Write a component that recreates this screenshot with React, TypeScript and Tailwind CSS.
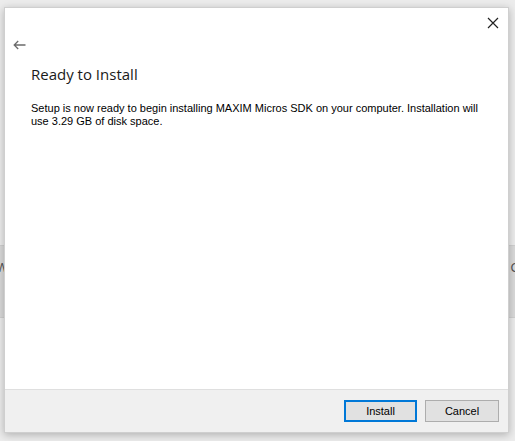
import React from 'react'

export default function App() {
  return (
    <div className="relative w-[515px] h-[441px] overflow-hidden bg-[#ececec] font-['Liberation_Sans',sans-serif]">
      {/* desktop behind the dialog */}
      <div className="absolute left-0 top-[245px] w-full h-[73px] bg-[#dadada] border-y border-[#d0d0d0]">
        <span className="absolute left-[-4px] top-[12px] text-[13px] text-[#555]">W</span>
        <span className="absolute right-[-5px] top-[12px] text-[13px] text-[#555]">C</span>
      </div>

      {/* dialog window */}
      <div className="absolute left-[4px] top-[7px] w-[505px] h-[426px] flex flex-col bg-white border border-[#cfcfcf] shadow-[0_2px_8px_rgba(0,0,0,0.25)]">
        <div className="flex-1 flex flex-col">
          <div className="flex justify-end h-[32px] pr-[9px] pt-[9px]">
            <svg width="12" height="12" viewBox="0 0 12 12" className="text-[#222]">
              <path d="M1 1L11 11M11 1L1 11" stroke="currentColor" strokeWidth="1.2" fill="none" />
            </svg>
          </div>
          <div className="pl-[8px] h-[14px]">
            <svg width="13" height="10" viewBox="0 0 13 10" className="text-[#6b6b6b]">
              <path d="M12.5 5H1.2M5.2 1L1.2 5L5.2 9" stroke="currentColor" strokeWidth="1.3" fill="none" />
            </svg>
          </div>
          <div className="pl-[26px] pt-[10px]">
            <h1 className="font-['Open_Sans',sans-serif] text-[15px] leading-[20px] text-[#1a1a1a]">Ready to Install</h1>
            <p className="mt-[18px] w-[452px] text-[11px] leading-[13px] text-black">
              Setup is now ready to begin installing MAXIM Micros SDK on your computer. Installation will use 3.29 GB of disk space.
            </p>
          </div>
        </div>
        <div className="h-[43px] flex items-center justify-end gap-[8px] pr-[9px] bg-[#f0f0f0] border-t border-[#dfdfdf]">
          <button className="w-[73px] h-[22px] bg-[#e1e1e1] border-2 border-[#0078d7] text-[11px] text-black">Install</button>
          <button className="w-[74px] h-[22px] bg-[#e1e1e1] border border-[#adadad] text-[11px] text-black">Cancel</button>
        </div>
      </div>
    </div>
  )
}
